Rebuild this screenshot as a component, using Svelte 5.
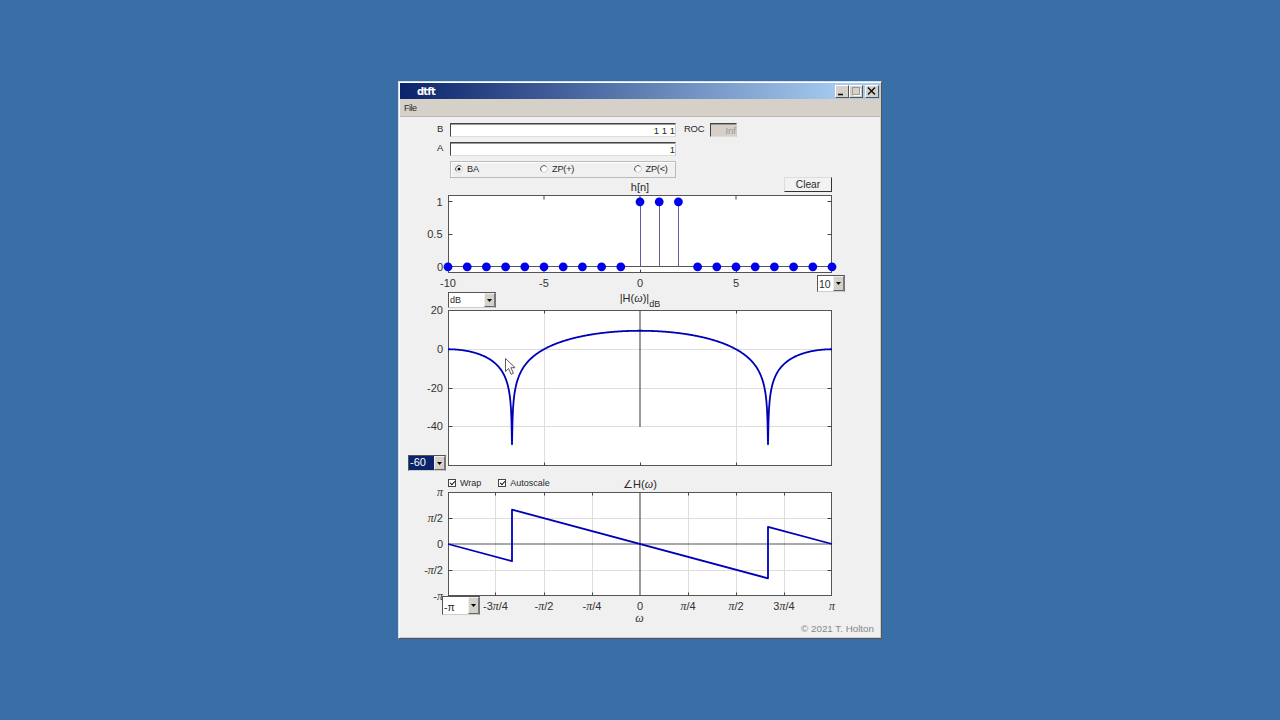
<script lang="ts">
  const W = 384;

  let mode = $state('BA');
  let wrap = $state(true);
  let autoscale = $state(true);

  // h[n] = 1 for n = 0..2
  const samples = Array.from({ length: 21 }, (_, i) => {
    const n = i - 10;
    return { n, value: n >= 0 && n <= 2 ? 1 : 0 };
  });

  const stemX = (n: number) => ((n + 10) / 20) * W;
  const stemY = (v: number) => 71.8 - v * 65;
  const freqX = (w: number) => ((w + Math.PI) / (2 * Math.PI)) * W;
  const magY = (db: number) => 0.5 + ((20 - db) / 80) * 155;
  const phaseY = (p: number) => 0.5 + ((Math.PI - p) / (2 * Math.PI)) * 103;

  const magnitude = Array.from({ length: 769 }, (_, i) => {
    const w = -Math.PI + (i / 768) * 2 * Math.PI;
    const db = 20 * Math.log10(Math.abs(1 + 2 * Math.cos(w)) + 1e-9);
    return `${freqX(w).toFixed(2)},${magY(Math.max(db, -49)).toFixed(2)}`;
  }).join(' ');

  const third = Math.PI / 3;
  const phase = [
    [-Math.PI, 0],
    [-2 * third, -third],
    [-2 * third, 2 * third],
    [2 * third, -2 * third],
    [2 * third, third],
    [Math.PI, 0],
  ]
    .map(([w, p]) => `${freqX(w)},${phaseY(p)}`)
    .join(' ');

  // tick label parts: before, pi, after
  const phaseYTicks = [
    { y: 0.5, parts: ['', 'π', ''] },
    { y: 26.5, parts: ['', 'π', '/2'] },
    { y: 52.5, parts: ['0', '', ''] },
    { y: 78.5, parts: ['-', 'π', '/2'] },
    { y: 104.5, parts: ['-', 'π', ''] },
  ];
  const phaseXTicks = [
    { x: 47.5, parts: ['-3', 'π', '/4'] },
    { x: 96, parts: ['-', 'π', '/2'] },
    { x: 144, parts: ['-', 'π', '/4'] },
    { x: 192, parts: ['0', '', ''] },
    { x: 240, parts: ['', 'π', '/4'] },
    { x: 288, parts: ['', 'π', '/2'] },
    { x: 336, parts: ['3', 'π', '/4'] },
    { x: 384, parts: ['', 'π', ''] },
  ];
</script>

{#snippet combo(text: string, cls: string)}
  <div class="combo {cls}">
    <span class="value">{text}</span>
    <span class="arrow"><svg width="5" height="3"><path d="M0 0h5L2.5 3z" /></svg></span>
  </div>
{/snippet}

{#snippet label(parts: string[])}
  {parts[0]}<tspan class="greek">{parts[1]}</tspan>{parts[2]}
{/snippet}

<main class="desktop">
  <section class="window">
    <header class="titlebar">
      <span class="caption">dtft</span>
      <button class="sys" aria-label="Minimize">
        <svg width="11" height="10"><path d="M2 8.5h5" stroke="#111" stroke-width="1.6" /></svg>
      </button>
      <button class="sys" aria-label="Maximize">
        <svg width="11" height="10">
          <path d="M2.5 1.5h7v7h-7z" fill="none" stroke="#999" /><path d="M3.5 9.5h7v-7" fill="none" stroke="#fff" />
        </svg>
      </button>
      <button class="sys close" aria-label="Close">
        <svg width="11" height="10"><path d="M2 1.5l7 7M9 1.5l-7 7" stroke="#111" stroke-width="1.5" /></svg>
      </button>
    </header>
    <nav class="menu">File</nav>

    <div class="form">
      <div class="field">
        <span class="name">B</span><span class="input">1 1 1</span>
        <span class="roc">ROC</span><span class="input disabled">Inf</span>
      </div>
      <div class="field">
        <span class="name">A</span><span class="input">1</span>
      </div>
      <div class="modes">
        {#each ['BA', 'ZP(+)', 'ZP(<)'] as m}
          <button class="mode" onclick={() => (mode = m)}>
            <svg width="8" height="8" viewBox="0 0 9 9">
              <circle cx="4.5" cy="4.5" r="3.5" fill="#fff" />
              <path d="M1.8 7.2A3.8 3.8 0 0 1 7.2 1.8" fill="none" stroke="#444" />
              <path d="M7.2 1.8A3.8 3.8 0 0 1 1.8 7.2" fill="none" stroke="#ccc" />
              {#if mode === m}<circle cx="4.5" cy="4.5" r="1.7" fill="#111" />{/if}
            </svg>
            {m}
          </button>
        {/each}
      </div>
    </div>

    <div class="head">
      <div></div>
      <h2>h[n]</h2>
      <button class="clear">Clear</button>
    </div>
    <div class="figure">
      <svg width="480" height="97" viewBox="-48 0 480 97">
        <rect class="area" x="0.5" y="0.5" width="383" height="77" />
        <path
          class="tick"
          d="M.5 6.5h4M.5 39.5h4M383.5 6.5h-4M383.5 39.5h-4M96 .5v4M192 .5v4M288 .5v4M96 77.5v-3M192.5 77.5v-3M288.5 77.5v-3"
        />
        <path class="axis" d="M0 71.5H384" />
        {#each samples as s}
          {#if s.value}
            <path class="stem" d="M{Math.round(stemX(s.n)) + 0.5} {stemY(0)}V{stemY(s.value)}" />
          {/if}
          <circle cx={stemX(s.n)} cy={stemY(s.value)} r="4.4" fill="#0000eb" />
        {/each}
        <g class="ylab">
          <text x="-5.5" y="10.5">1</text>
          <text x="-5.5" y="43">0.5</text>
          <text x="-5" y="75.5">0</text>
        </g>
        <g class="xlab">
          <text x="0" y="92">-10</text>
          <text x="96" y="92">-5</text>
          <text x="192" y="92">0</text>
          <text x="288" y="92">5</text>
        </g>
      </svg>
      {@render combo('10', 'range')}
    </div>

    <div class="head">
      {@render combo('dB', 'unit')}
      <h2 class="raised">|H(<i>ω</i>)|<sub>dB</sub></h2>
      <div></div>
    </div>
    <div class="figure">
      <svg width="480" height="164" viewBox="-48 0 480 164">
        <rect class="area" x="0.5" y="0.5" width="383" height="155" />
        <path class="grid" d="M96.5 1v154M288.5 1v154M1 39.5h382M1 78.5h382M1 116.5h382" />
        <path
          class="tick"
          d="M.5 78.5h4M.5 116.5h4M383.5 78.5h-4M383.5 116.5h-4M96.5 .5v3M288.5 .5v3M96.5 155.5v-3M192.5 155.5v-3M288.5 155.5v-3"
        />
        <path class="axis" d="M192 0V117" />
        <polyline class="curve" points={magnitude} />
        <g class="ylab">
          {#each [20, 0, -20, -40] as v}
            <text x="-5" y={magY(v) + 3.7}>{v}</text>
          {/each}
        </g>
        <path
          d="M57.5 48.5v13l3-3 2.6 5.8 2.3-1-2.5-5.6h4.2z"
          fill="#fff"
          stroke="#333"
          stroke-width="0.8"
        />
      </svg>
      {@render combo('-60', 'floor')}
    </div>

    <div class="head">
      <div class="checks">
        <label><input type="checkbox" bind:checked={wrap} />Wrap</label>
        <label><input type="checkbox" bind:checked={autoscale} />Autoscale</label>
      </div>
      <h2>∠H(<i>ω</i>)</h2>
      <div></div>
    </div>
    <div class="figure">
      <svg width="480" height="130" viewBox="-48 0 480 130">
        <rect class="area" x="0.5" y="0.5" width="383" height="103" />
        <path class="grid" d="M47.5 1v102M96.5 1v102M144.5 1v102M240.5 1v102M288.5 1v102M336.5 1v102M1 26.5h382M1 78.5h382" />
        <path
          class="tick"
          d="M.5 26.5h4M.5 78.5h4M383.5 26.5h-4M383.5 78.5h-4M47.5 .5v3M96.5 .5v3M144.5 .5v3M240.5 .5v3M288.5 .5v3M336.5 .5v3M47.5 103.5v-3M96.5 103.5v-3M144.5 103.5v-3M240.5 103.5v-3M288.5 103.5v-3M336.5 103.5v-3"
        />
        <path class="axis" d="M192 0V104M0 52H384" />
        <polyline class="curve" points={phase} />
        <g class="ylab">
          {#each phaseYTicks as t}
            <text x="-5" y={t.y + 3.3}>{@render label(t.parts)}</text>
          {/each}
        </g>
        <g class="xlab">
          {#each phaseXTicks as t}
            <text x={t.x} y="117.5">{@render label(t.parts)}</text>
          {/each}
          <text class="greek" x="191.5" y="130">ω</text>
        </g>
      </svg>
      {@render combo('-π', 'start')}
    </div>
    <footer>© 2021 T. Holton</footer>
  </section>
</main>

<style>
  :global(body) {
    background: #3a6ea7;
  }
  .desktop {
    box-sizing: border-box;
    height: 720px;
    padding: 81px 0 0 398px;
    overflow: hidden;
    font-family: 'Liberation Sans', Arial, sans-serif;
    font-size: 9.5px;
    color: #2a2a2a;
  }
  .window {
    box-sizing: border-box;
    width: 484px;
    height: 558px;
    padding: 1px;
    border: 1px solid #d5dfe8;
    border-right-color: #555;
    border-bottom-color: #555;
    background: #f0f0f0;
    box-shadow: inset 1px 1px #fff, inset -1px -1px #ccc;
  }
  button {
    padding: 0;
    font: inherit;
    color: inherit;
    border: 0;
    background: none;
  }
  .titlebar {
    display: flex;
    align-items: center;
    box-sizing: border-box;
    height: 16px;
    padding-right: 1px;
    background: linear-gradient(90deg, #0a246a, #a6caf0 92%);
  }
  .caption {
    flex: 1;
    padding-left: 17px;
    color: #fff;
    font: bold 10px 'DejaVu Sans', sans-serif;
    letter-spacing: -0.8px;
  }
  .sys {
    display: flex;
    box-sizing: border-box;
    width: 14px;
    height: 13px;
    border: 1px solid #fff;
    border-right-color: #555;
    border-bottom-color: #555;
    background: #d6d2ca;
  }
  .close {
    margin-left: 2px;
  }
  .menu {
    box-sizing: border-box;
    height: 18px;
    padding: 4px 4px 0;
    line-height: 11px;
    font-size: 9px;
    letter-spacing: -0.5px;
    background: #d5d1c8;
    border-bottom: 1px solid #bbb8b2;
  }
  .form {
    box-sizing: border-box;
    height: 60px;
    padding-top: 6px;
  }
  .field {
    display: flex;
    height: 19px;
    line-height: 11px;
  }
  .name {
    width: 13px;
    padding-left: 37px;
  }
  .input {
    box-sizing: border-box;
    width: 226px;
    height: 14px;
    border-top: 1px solid #444;
    border-left: 1px solid #444;
    border-bottom: 1px solid #ddd;
    border-right: 1px solid #ccc;
    background: #fff;
    box-shadow: inset 0 1px #999;
    text-align: right;
    line-height: 14px;
  }
  .roc {
    width: 26px;
    padding-left: 8px;
    letter-spacing: -0.3px;
  }
  .disabled {
    width: 27px;
    color: #999;
    background: #d5d1c9;
  }
  .modes {
    display: flex;
    box-sizing: border-box;
    width: 226px;
    height: 17px;
    margin-left: 50px;
    border: 1px solid #bbb;
    box-shadow: inset 1px 1px #fff;
  }
  .mode {
    display: flex;
    align-items: center;
    gap: 4px;
    width: 93.5px;
    padding: 0 0 1px 4px;
    white-space: nowrap;
    font-size: 9.2px;
    letter-spacing: -0.2px;
  }
  .mode:first-child {
    width: 85px;
  }
  .mode:last-child {
    width: 40px;
  }
  .head {
    display: grid;
    grid-template-columns: 1fr auto 1fr;
    height: 18px;
    padding: 0 48px;
  }
  h2 {
    margin: 4px 0 0;
    font-size: 11px;
    font-weight: normal;
    line-height: 12px;
  }
  .raised {
    margin-top: 0;
  }
  .head h2 i,
  .greek {
    font-family: 'Liberation Serif', serif;
    font-style: italic;
    font-size: 12px;
  }
  h2 sub {
    font-size: 9px;
    line-height: 0;
    vertical-align: -5px;
  }
  .clear {
    justify-self: end;
    box-sizing: border-box;
    width: 48px;
    height: 15px;
    font-size: 10.2px;
    background: #f2f2f2;
    border: 1px solid #ddd;
    border-right-color: #333;
    border-bottom-color: #333;
  }
  .figure {
    position: relative;
  }
  .figure > svg {
    display: block;
    overflow: visible;
  }
  .area {
    fill: #fff;
    stroke: #555;
  }
  .grid {
    stroke: #dedede;
  }
  .tick {
    stroke: #444;
  }
  .axis {
    stroke: #555;
    stroke-width: 1.2;
  }
  .stem {
    stroke: #5c5ca4;
  }
  .curve {
    fill: none;
    stroke: #0000b8;
    stroke-width: 1.8;
    stroke-linejoin: round;
  }
  .ylab,
  .xlab {
    font-size: 11px;
    fill: #333;
  }
  .ylab {
    text-anchor: end;
  }
  .xlab {
    text-anchor: middle;
  }
  .combo {
    display: flex;
    box-sizing: border-box;
    border: 1px solid #555;
    border-right-color: #777;
    border-bottom-color: #ccc;
    background: #fff;
  }
  .value {
    flex: 1;
    align-self: center;
    padding-left: 1px;
  }
  .arrow {
    display: grid;
    place-items: center;
    box-sizing: border-box;
    width: 11px;
    background: #d5d1c9;
    border: 1px solid #eee;
    border-right-color: #777;
    border-bottom-color: #666;
  }
  .unit {
    width: 48px;
    height: 16px;
    font-size: 9px;
  }
  .range,
  .floor,
  .start {
    position: absolute;
  }
  .range {
    left: 417px;
    top: 80px;
    width: 28px;
    height: 17px;
    font-size: 10.5px;
  }
  .floor {
    left: 8px;
    top: 145px;
    width: 38px;
    height: 16px;
    font-size: 11px;
  }
  .floor .value {
    align-self: stretch;
    color: #fff;
    line-height: 13px;
    background: #0a246a;
  }
  .start {
    left: 42px;
    top: 104px;
    width: 38px;
    height: 19px;
    font-size: 10.5px;
  }
  .start .value {
    padding-top: 2px;
  }
  .checks {
    display: flex;
    align-items: center;
    gap: 17px;
    font-size: 9px;
  }
  .checks label {
    display: flex;
    align-items: center;
    gap: 4px;
  }
  .checks input {
    appearance: none;
    display: grid;
    place-items: center;
    box-sizing: border-box;
    width: 8px;
    height: 8px;
    margin: 0;
    border: 1px solid #444;
    background: #fff;
  }
  .checks input:checked::before {
    content: '';
    width: 2px;
    height: 4px;
    margin-top: -1px;
    border: solid #111;
    border-width: 0 1.3px 1.3px 0;
    transform: rotate(42deg);
  }
  footer {
    padding-right: 6px;
    text-align: right;
    line-height: 13px;
    font-size: 9.8px;
    color: #888;
  }
</style>
